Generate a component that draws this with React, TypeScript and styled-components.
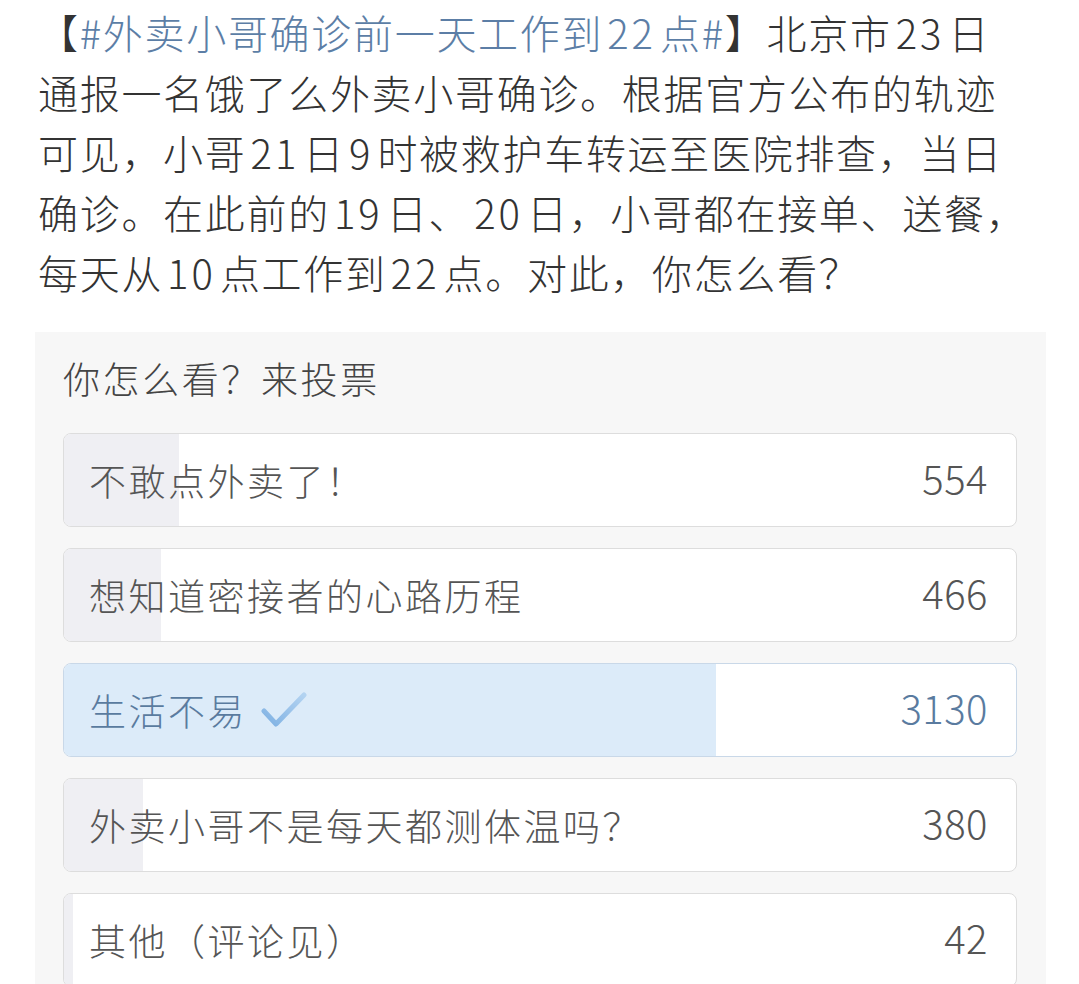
import * as React from "react";
import styled, { createGlobalStyle } from "styled-components";

const GlobalStyle = createGlobalStyle`
    html, body {
        margin: 0;
        padding: 0;
        background: #ffffff;
    }
    body {
        font-family: "Noto Sans CJK SC", "Noto Sans", sans-serif;
        font-weight: 300;
    }
`;

const Page = styled.div`
    width: 1079px;
    padding-top: 2px;
`;

const Post = styled.div`
    padding-left: 38px;
    font-size: 40px;
    line-height: 60px;
    letter-spacing: 1.7px;
    color: #333333;
`;

const Line = styled.div`
    white-space: nowrap;
`;

// digits sit a little apart from the CJK text around them
const Num = styled.span`
    margin: 0 4px;
    letter-spacing: 3px;
`;

const Topic = styled.span`
    color: #5c7ea6;
`;

const PollCard = styled.div`
    width: 1011px;
    box-sizing: border-box;
    margin: 30px 0 0 35px;
    padding: 21px 29px 40px 28px;
    background: #f7f7f7;
`;

const PollTitle = styled.div`
    font-size: 37px;
    line-height: 50px;
    letter-spacing: 2.6px;
    color: #444444;
`;

const Options = styled.div`
    display: flex;
    flex-direction: column;
    gap: 21px;
    margin-top: 30px;
`;

const Option = styled.div<{ $picked?: boolean }>`
    position: relative;
    height: 94px;
    box-sizing: border-box;
    display: flex;
    align-items: center;
    justify-content: space-between;
    padding: 0 28px 0 25px;
    background: #ffffff;
    border: 1px solid ${(p) => (p.$picked ? "#c9d8e8" : "#dddddd")};
    border-radius: 8px;
    overflow: hidden;
    color: ${(p) => (p.$picked ? "#5a7b9f" : "#555555")};
`;

const Fill = styled.div<{ $picked?: boolean }>`
    position: absolute;
    left: 0;
    top: 0;
    bottom: 0;
    background: ${(p) => (p.$picked ? "#dcebf9" : "#efeff3")};
`;

const Label = styled.span`
    position: relative;
    display: flex;
    align-items: center;
    gap: 14px;
    font-size: 37px;
    letter-spacing: 2.5px;
    white-space: nowrap;
`;

const Count = styled.span`
    position: relative;
    font-size: 40px;
    letter-spacing: 0.5px;
    padding-bottom: 6px;
`;

const Check = () => (
    <svg width="46" height="38" viewBox="0 0 46 38">
        <defs>
            <linearGradient id="ck" x1="0" y1="1" x2="1" y2="0">
                <stop offset="0" stopColor="#7fb1e3" />
                <stop offset="1" stopColor="#b3d3f1" />
            </linearGradient>
        </defs>
        <path
            d="M3 20 L15 33 L43 4"
            fill="none"
            stroke="url(#ck)"
            strokeWidth="5"
            strokeLinecap="round"
            strokeLinejoin="round"
        />
    </svg>
);

const choices = [
    { text: "不敢点外卖了！", votes: 554 },
    { text: "想知道密接者的心路历程", votes: 466 },
    { text: "生活不易", votes: 3130, picked: true },
    { text: "外卖小哥不是每天都测体温吗？", votes: 380 },
    { text: "其他（评论见）", votes: 42 },
];

export default function App() {
    const total = choices.reduce((s, c) => s + c.votes, 0);
    return (
        <Page>
            <GlobalStyle />
            <Post>
                <Line>
                    【<Topic>#外卖小哥确诊前一天工作到<Num>22</Num>点#</Topic>】北京市<Num>23</Num>日
                </Line>
                <Line>通报一名饿了么外卖小哥确诊。根据官方公布的轨迹</Line>
                <Line>
                    可见，小哥<Num>21</Num>日<Num>9</Num>时被救护车转运至医院排查，当日
                </Line>
                <Line>
                    确诊。在此前的<Num>19</Num>日、<Num>20</Num>日，小哥都在接单、送餐，
                </Line>
                <Line>
                    每天从<Num>10</Num>点工作到<Num>22</Num>点。对此，你怎么看？
                </Line>
            </Post>
            <PollCard>
                <PollTitle>你怎么看？来投票</PollTitle>
                <Options>
                    {choices.map((c) => (
                        <Option key={c.text} $picked={c.picked}>
                            <Fill $picked={c.picked} style={{ width: `${(c.votes / total) * 100}%` }} />
                            <Label>
                                {c.text}
                                {c.picked && <Check />}
                            </Label>
                            <Count>{c.votes}</Count>
                        </Option>
                    ))}
                </Options>
            </PollCard>
        </Page>
    );
}
